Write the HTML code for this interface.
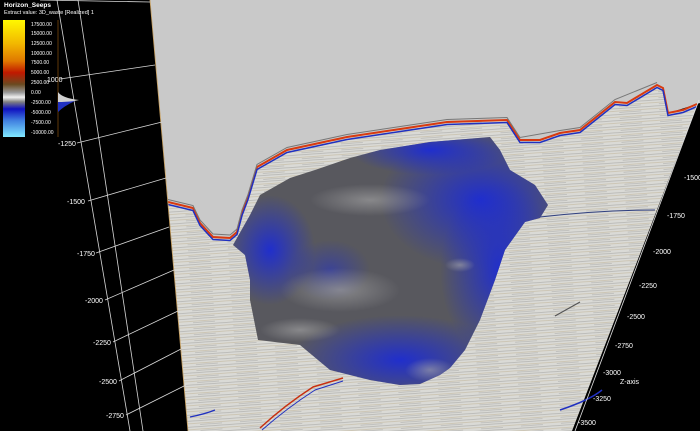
<!DOCTYPE html>
<html><head><meta charset="utf-8"><style>
html,body{margin:0;padding:0;background:#000;width:700px;height:431px;overflow:hidden}
svg{display:block}
text{font-family:"Liberation Sans",sans-serif;fill:#fff}
</style></head><body>
<svg width="700" height="431" viewBox="0 0 700 431" xmlns="http://www.w3.org/2000/svg">
<defs>
<linearGradient id="cb" x1="0" y1="0" x2="0" y2="1">
<stop offset="0" stop-color="#fff800"/>
<stop offset="0.2" stop-color="#f2b800"/>
<stop offset="0.35" stop-color="#e07800"/>
<stop offset="0.45" stop-color="#c01800"/>
<stop offset="0.55" stop-color="#6a4a20"/>
<stop offset="0.62" stop-color="#9a9a9a"/>
<stop offset="0.66" stop-color="#f0f0f0"/>
<stop offset="0.7" stop-color="#808080"/>
<stop offset="0.76" stop-color="#1010c0"/>
<stop offset="0.86" stop-color="#4080e0"/>
<stop offset="1" stop-color="#80e8ff"/>
</linearGradient>
<pattern id="str" width="40" height="6" patternUnits="userSpaceOnUse" patternTransform="rotate(-4)">
<rect width="40" height="6" fill="#dadad6"/>
<rect y="1" width="40" height="0.8" fill="#8a8a8a" opacity="0.45"/>
<rect y="3.5" width="40" height="0.8" fill="#b09a70" opacity="0.4"/>
<rect x="10" y="5" width="22" height="0.7" fill="#666" opacity="0.3"/>
</pattern>
<clipPath id="blobc"><path d="M233,245 L250,215 L260,195 L290,178 L315,170 L350,158 L380,150 L430,142 L490,137 L500,150 L510,170 L535,185 L548,205 L540,218 L525,222 L505,250 L495,280 L480,320 L465,350 L450,368 L440,375 L420,384 L400,385 L370,380 L330,370 L300,345 L258,340 L250,300 L250,280 L245,255 Z"/></clipPath>
<radialGradient id="bl1" cx="0.5" cy="0.5" r="0.5"><stop offset="0" stop-color="#1a2ad8" stop-opacity="0.9"/><stop offset="1" stop-color="#1a2ad8" stop-opacity="0"/></radialGradient>
<radialGradient id="gl" cx="0.5" cy="0.5" r="0.5"><stop offset="0" stop-color="#a8a8a8" stop-opacity="0.6"/><stop offset="1" stop-color="#a8a8a8" stop-opacity="0"/></radialGradient>
</defs>
<rect width="700" height="431" fill="#000"/>
<!-- sky -->
<polygon points="150,0 700,0 700,103 240,250 213,240 168,202" fill="#c9c9c9"/>
<!-- seismic area -->
<path d="M168,202 L193,208 L200,223 L213,237 L230,238 L237,232 L242,213 L248,197 L257,167 L287,150 L347,137 L407,128 L447,122 L507,120 L520,140 L540,140 L560,133 L580,130 L615,102 L627,103 L657,85 L663,88 L668,113 L683,110 L698,103 L572,431 L188,431 Z" fill="url(#str)"/>
<!-- seafloor horizon -->
<path d="M168,202 L193,208 L200,223 L213,237 L230,238 L237,232 L242,213 L248,197 L257,167 L287,150 L347,137 L407,128 L447,122 L507,120 L520,140 L540,140 L560,133 L580,130 L615,102 L627,103 L657,85 L663,88 L668,113 L683,110 L697,104" fill="none" stroke="#d83a10" stroke-width="2"/>
<path d="M168,204.5 L193,210.5 L200,225.5 L213,239.5 L230,240.5 L237,234.5 L242,215.5 L248,199.5 L257,169.5 L287,152.5 L347,139.5 L407,130.5 L447,124.5 L507,122.5 L520,142.5 L540,142.5 L560,135.5 L580,132.5 L615,104.5 L627,105.5 L657,87.5 L663,90.5 L668,115.5 L683,112.5 L697,106.5" fill="none" stroke="#2030c0" stroke-width="1.5"/>
<path d="M168,199.5 L193,205.5 L200,220 L213,234 L230,235 L237,229 L242,210 L248,194.5 L257,164.5 L287,147.5 L347,134.5 L407,125.5 L447,119.5 L507,117.5 L520,137.5 L560,130.5 L580,127.5 L615,99.5 L657,82.5" fill="none" stroke="#777" stroke-width="1"/>
<!-- deep horizons -->
<path d="M190,417 Q205,414 215,410" fill="none" stroke="#2030c0" stroke-width="1.3"/>
<path d="M260,428 Q285,405 313,387 L343,378" fill="none" stroke="#c83010" stroke-width="1.5"/>
<path d="M262,430 Q287,408 315,390 L343,381" fill="none" stroke="#2030c0" stroke-width="1"/>
<path d="M560,410 Q590,400 602,390" fill="none" stroke="#2030c0" stroke-width="1.5"/>
<path d="M555,316 L580,302" fill="none" stroke="#555" stroke-width="1.2"/>
<path d="M655,210 Q600,210 540,217" fill="none" stroke="#304080" stroke-width="1"/>
<!-- blob -->
<g clip-path="url(#blobc)">
<rect x="220" y="130" width="340" height="270" fill="#58585e"/>
<ellipse cx="480" cy="200" rx="100" ry="70" fill="url(#bl1)"/>
<ellipse cx="500" cy="270" rx="60" ry="90" fill="url(#bl1)"/>
<ellipse cx="400" cy="360" rx="110" ry="45" fill="url(#bl1)"/>
<ellipse cx="270" cy="250" rx="45" ry="55" fill="url(#bl1)"/>
<ellipse cx="430" cy="150" rx="80" ry="25" fill="url(#bl1)"/>
<ellipse cx="330" cy="270" rx="40" ry="30" fill="url(#bl1)" opacity="0.5"/>
<ellipse cx="340" cy="290" rx="60" ry="22" fill="url(#gl)"/>
<ellipse cx="370" cy="200" rx="60" ry="16" fill="url(#gl)"/>
<ellipse cx="300" cy="330" rx="40" ry="12" fill="url(#gl)"/>
<ellipse cx="430" cy="370" rx="25" ry="12" fill="url(#gl)"/>
<ellipse cx="460" cy="265" rx="15" ry="7" fill="url(#gl)"/>
</g>
<!-- axis lines left -->
<g stroke="#d8d8d8" stroke-width="0.8" fill="none">
<line x1="57" y1="0" x2="130" y2="431"/>
<line x1="78" y1="0" x2="143" y2="431"/>
<line x1="150" y1="0" x2="188" y2="431" stroke="#c8a060"/>
<line x1="60" y1="79" x2="155" y2="65"/>
<line x1="77" y1="143" x2="162" y2="122"/>
<line x1="88" y1="201" x2="166" y2="178"/>
<line x1="96" y1="253" x2="169" y2="227"/>
<line x1="105" y1="300" x2="174" y2="270"/>
<line x1="113" y1="342" x2="178" y2="311"/>
<line x1="119" y1="381" x2="181" y2="349"/>
<line x1="126" y1="415" x2="186" y2="385"/>
<line x1="40" y1="0" x2="150" y2="2"/>
</g>
<g font-size="7">
<text x="47" y="82">1000</text>
<text x="58" y="146">-1250</text>
<text x="67" y="204">-1500</text>
<text x="77" y="256">-1750</text>
<text x="85" y="303">-2000</text>
<text x="93" y="345">-2250</text>
<text x="99" y="384">-2500</text>
<text x="106" y="418">-2750</text>
</g>
<!-- right axis -->
<line x1="699" y1="100" x2="575" y2="431" stroke="#e0e0e0" stroke-width="0.8"/>
<g font-size="7">
<text x="684" y="180">-1500</text>
<text x="667" y="218">-1750</text>
<text x="653" y="254">-2000</text>
<text x="639" y="288">-2250</text>
<text x="627" y="319">-2500</text>
<text x="615" y="348">-2750</text>
<text x="603" y="375">-3000</text>
<text x="620" y="384">Z-axis</text>
<text x="593" y="401">-3250</text>
<text x="578" y="425">-3500</text>
</g>
<!-- legend -->
<text x="4" y="7" font-size="6.5" font-weight="bold">Horizon_Seeps</text>
<text x="4" y="14" font-size="5.5">Extract value: 3D_waste [Realized] 1</text>
<rect x="3" y="20" width="22" height="117" fill="url(#cb)"/>
<g font-size="5">
<text x="31" y="26">17500.00</text>
<text x="31" y="35">15000.00</text>
<text x="31" y="45">12500.00</text>
<text x="31" y="55">10000.00</text>
<text x="31" y="64">7500.00</text>
<text x="31" y="74">5000.00</text>
<text x="31" y="84">2500.00</text>
<text x="31" y="94">0.00</text>
<text x="31" y="104">-2500.00</text>
<text x="31" y="114">-5000.00</text>
<text x="31" y="124">-7500.00</text>
<text x="31" y="134">-10000.00</text>
</g>
<line x1="58" y1="20" x2="58" y2="137" stroke="#a06010" stroke-width="0.6"/>
<path d="M58,92 Q62,98 79,100 Q62,103 58,112 Z" fill="#d0d0d0"/>
<path d="M58,102 Q65,102 75,101 Q64,106 58,112 Z" fill="#2030c0"/>
</svg>
</body></html>
